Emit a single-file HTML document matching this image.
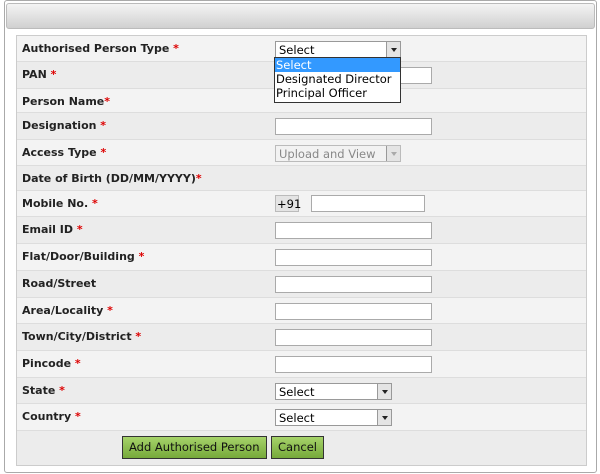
<!DOCTYPE html>
<html><head><meta charset="utf-8"><style>
*{box-sizing:border-box;margin:0;padding:0}
body{width:600px;height:474px;background:#fff;position:relative;overflow:hidden;font-family:"DejaVu Sans","Liberation Sans",sans-serif}
.dlg{position:absolute;left:4px;top:0;width:593px;height:473px;border:1px solid #aaa;border-radius:3px;background:#fff}
.title{position:absolute;left:1px;top:2px;width:589px;height:26px;border:1px solid #bbb;border-radius:3px;background:linear-gradient(#f4f4f4,#d0d0d0)}
.tbl{position:absolute;left:11px;top:34px;width:571px;border:1px solid #ccc;background:#efefef}
.row{position:relative;height:26px;border-bottom:1px solid #ddd;background:#f3f3f3}
.row:nth-child(even){background:#ececec}
.lbl{position:absolute;left:5px;top:6px;font-size:11px;font-weight:bold;color:#222}
.lbl b{color:#d00}
.in{position:absolute;left:258px;top:5px;width:157px;height:17px;border:1px solid #aaa;background:#fff}
.sel{position:absolute;left:258px;top:5px;width:126px;height:17px;border:1px solid #999;background:#fff;font-size:11.5px;padding:1px 3px;color:#000}
.sel:after{content:"";position:absolute;right:0;top:0;width:13px;height:15px;background:#e4e4e4;border-left:1px solid #999}
.sel i{position:absolute;right:3px;top:6px;border-left:3px solid transparent;border-right:3px solid transparent;border-top:4px solid #222;z-index:2}
.btn{position:absolute;top:5px;height:23px;border:1px solid #333;background:linear-gradient(#a6d36a,#76a93a);font-size:11.5px;line-height:21px;padding:0 6px;color:#111}
</style></head><body>
<div class="dlg">
<div class="title"></div>
<div class="tbl">
<div class="row" style="height:26px"><div class="lbl">Authorised Person Type <b>*</b></div><div class="sel">Select<i></i></div></div>
<div class="row" style="height:27px"><div class="lbl">PAN <b>*</b></div><div class="in"></div></div>
<div class="row" style="height:24px"><div class="lbl">Person Name<b>*</b></div></div>
<div class="row" style="height:27px"><div class="lbl">Designation <b>*</b></div><div class="in"></div></div>
<div class="row" style="height:26px"><div class="lbl">Access Type <b>*</b></div><div class="sel" style="color:#888;border-color:#bbb;background:#f2f2f2">Upload and View<i style="border-top-color:#aaa"></i></div></div>
<div class="row" style="height:25px"><div class="lbl">Date of Birth (DD/MM/YYYY)<b>*</b></div></div>
<div class="row" style="height:26px"><div class="lbl">Mobile No. <b>*</b></div><div style="position:absolute;left:258px;top:4px;width:24px;height:17px;border:1px solid #bbb;background:#e4e4e4;font-size:11.5px;padding:1px 1px">+91</div><div class="in" style="left:294px;top:4px;width:114px"></div></div>
<div class="row" style="height:27px"><div class="lbl">Email ID <b>*</b></div><div class="in"></div></div>
<div class="row" style="height:27px"><div class="lbl">Flat/Door/Building <b>*</b></div><div class="in"></div></div>
<div class="row" style="height:27px"><div class="lbl">Road/Street</div><div class="in"></div></div>
<div class="row" style="height:26px"><div class="lbl">Area/Locality <b>*</b></div><div class="in"></div></div>
<div class="row" style="height:27px"><div class="lbl">Town/City/District <b>*</b></div><div class="in"></div></div>
<div class="row" style="height:27px"><div class="lbl">Pincode <b>*</b></div><div class="in"></div></div>
<div class="row" style="height:26px"><div class="lbl">State <b>*</b></div><div class="sel" style="width:117px">Select<i></i></div></div>
<div class="row" style="height:27px"><div class="lbl">Country <b>*</b></div><div class="sel" style="width:117px">Select<i></i></div></div>
<div class="row" style="height:34px;border:none"><div class="btn" style="left:105px">Add Authorised Person</div><div class="btn" style="left:254px">Cancel</div></div>
</div>
<div style="position:absolute;left:269px;top:56px;width:127px;height:46px;border:1px solid #333;background:#fff;font-size:11.5px;line-height:14px">
<div style="background:#3399ff;color:#fff;padding-left:1px">Select</div>
<div style="padding-left:1px">Designated Director</div>
<div style="padding-left:1px">Principal Officer</div>
</div>
</div>
</body></html>
